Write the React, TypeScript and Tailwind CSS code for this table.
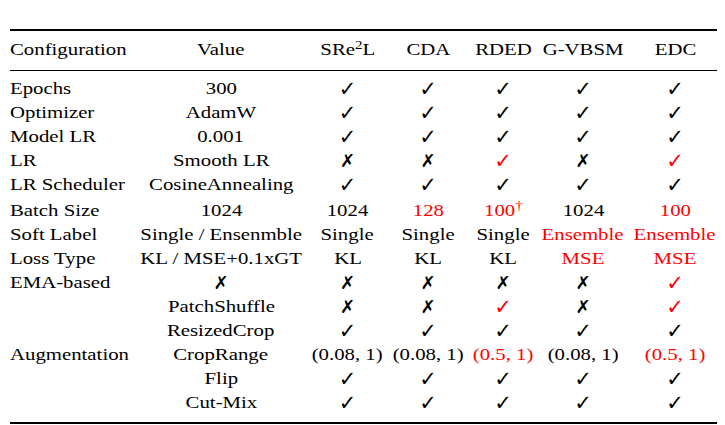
type Cell = { v: string; red?: boolean; sup?: string };

const C: Cell = { v: "✓" };
const X: Cell = { v: "✗" };
const RC: Cell = { v: "✓", red: true };

const rows: { name: string; value: Cell; cells: Cell[]; tall?: boolean }[] = [
  { name: "Epochs", value: { v: "300" }, cells: [C, C, C, C, C] },
  { name: "Optimizer", value: { v: "AdamW" }, cells: [C, C, C, C, C] },
  { name: "Model LR", value: { v: "0.001" }, cells: [C, C, C, C, C] },
  { name: "LR", value: { v: "Smooth LR" }, cells: [X, X, RC, X, RC] },
  { name: "LR Scheduler", value: { v: "CosineAnnealing" }, cells: [C, C, C, C, C] },
  {
    name: "Batch Size",
    value: { v: "1024" },
    tall: true,
    cells: [
      { v: "1024" },
      { v: "128", red: true },
      { v: "100", red: true, sup: "†" },
      { v: "1024" },
      { v: "100", red: true },
    ],
  },
  {
    name: "Soft Label",
    value: { v: "Single / Ensenmble" },
    cells: [
      { v: "Single" },
      { v: "Single" },
      { v: "Single" },
      { v: "Ensemble", red: true },
      { v: "Ensemble", red: true },
    ],
  },
  {
    name: "Loss Type",
    value: { v: "KL / MSE+0.1xGT" },
    cells: [{ v: "KL" }, { v: "KL" }, { v: "KL" }, { v: "MSE", red: true }, { v: "MSE", red: true }],
  },
  { name: "EMA-based", value: X, cells: [X, X, X, X, RC] },
  { name: "", value: { v: "PatchShuffle" }, cells: [X, X, RC, X, RC] },
  { name: "", value: { v: "ResizedCrop" }, cells: [C, C, C, C, C] },
  {
    name: "Augmentation",
    value: { v: "CropRange" },
    cells: [
      { v: "(0.08, 1)" },
      { v: "(0.08, 1)" },
      { v: "(0.5, 1)", red: true },
      { v: "(0.08, 1)" },
      { v: "(0.5, 1)", red: true },
    ],
  },
  { name: "", value: { v: "Flip" }, cells: [C, C, C, C, C] },
  { name: "", value: { v: "Cut-Mix" }, cells: [C, C, C, C, C] },
];

const grid = "grid grid-cols-[125px_172px_81px_80px_70px_90px_94px]";
// the table in the paper is stretched sideways (resizebox), so text is widened
const wide = "inline-block whitespace-nowrap scale-x-[1.26]";

function Val({ c }: { c: Cell }) {
  const mark = c.v === "✓" || c.v === "✗";
  return (
    <div className={`text-center ${c.red ? "text-[#ff0000]" : "text-black"}`}>
      {mark ? (
        <span
          className={`[font-family:'DejaVu_Sans',sans-serif] leading-[24px] ${
            c.v === "✓" ? "text-[21px]" : "text-[18px] font-bold"
          }`}
        >
          {c.v}
        </span>
      ) : (
        <span className={wide}>
          {c.v}
          {c.sup && <sup className="text-[12px]">{c.sup}</sup>}
        </span>
      )}
    </div>
  );
}

export default function App() {
  return (
    <div className="w-[725px] h-[425px] bg-white text-black [font-family:'Liberation_Serif','Times_New_Roman',serif] text-[16.5px] leading-[24px] overflow-hidden">
      <div className="ml-[10px] w-[707px] pt-[29px]">
        {/* top rule */}
        <div className="border-t-2 border-black pt-[7px] pb-[8px]">
          <div className={grid}>
            <div>
              <span className={`${wide} origin-left`}>Configuration</span>
            </div>
            <div className="text-center">
              <span className={wide}>Value</span>
            </div>
            <div className="text-center">
              <span className={wide}>
                SRe<sup className="text-[12px]">2</sup>L
              </span>
            </div>
            <div className="text-center">
              <span className={wide}>CDA</span>
            </div>
            <div className="text-center">
              <span className={wide}>RDED</span>
            </div>
            <div className="text-center">
              <span className={wide}>G-VBSM</span>
            </div>
            <div className="text-center">
              <span className={wide}>EDC</span>
            </div>
          </div>
        </div>

        {/* body */}
        <div className="border-t border-black pt-[6px] pb-[7px] border-b-2">
          {rows.map((r, i) => (
            <div key={i} className={`${grid} h-[24px] ${r.tall ? "pt-[2px] h-[26px]" : ""}`}>
              <div>
                <span className={`${wide} origin-left`}>{r.name}</span>
              </div>
              <Val c={r.value} />
              {r.cells.map((c, j) => (
                <Val key={j} c={c} />
              ))}
            </div>
          ))}
        </div>
      </div>
    </div>
  );
}
